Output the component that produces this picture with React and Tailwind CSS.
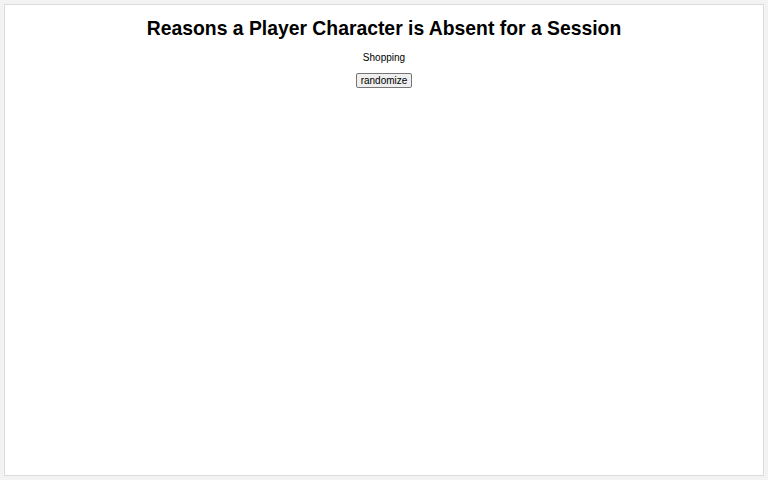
import React, { useState } from 'react';

const reasons = [
  'Shopping',
  'Sick with a cold',
  'Visiting family',
  'Lost in the woods',
  'Sleeping off a hangover',
  'Training with a mentor',
];

export default function App() {
  const [reason, setReason] = useState(reasons[0]);

  const randomize = () => {
    setReason(reasons[Math.floor(Math.random() * reasons.length)]);
  };

  return (
    <div className="h-[480px] bg-[#f3f3f3] p-1 font-['Liberation_Sans',Arial,sans-serif] text-black">
      <div className="h-full border border-[#dcdcdc] bg-white flex flex-col items-center">
        <h1 className="mt-[11px] text-[19.35px] leading-[24px] font-bold">
          Reasons a Player Character is Absent for a Session
        </h1>
        <p className="mt-[12px] text-[10px] leading-[12px]">{reason}</p>
        <button
          onClick={randomize}
          className="mt-[9px] px-[4px] h-[15px] text-[10px] leading-[12px] bg-[#efefef] border border-[#767676] rounded-[2px]"
        >
          randomize
        </button>
      </div>
    </div>
  );
}
